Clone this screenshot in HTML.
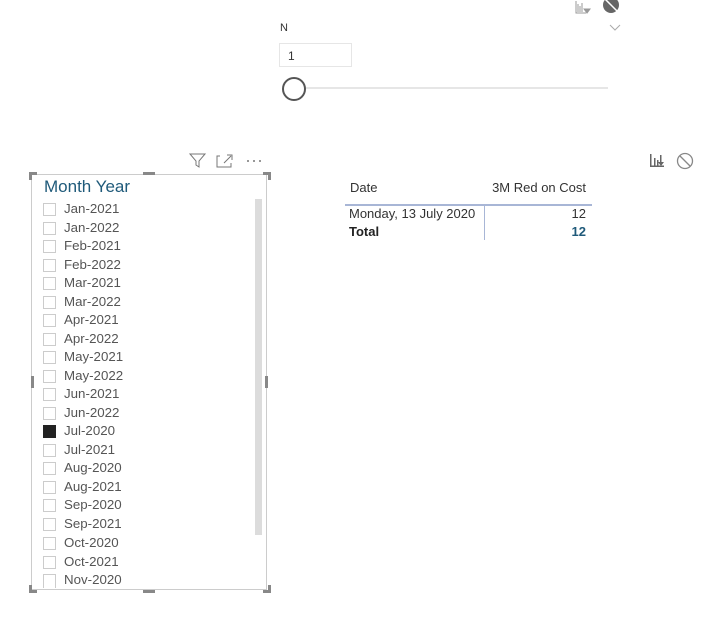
<!DOCTYPE html>
<html><head><style>
body{margin:0;width:711px;height:629px;background:#fff;position:relative;overflow:hidden;font-family:"Liberation Sans",Arial,sans-serif;}
.a{position:absolute}
.item{position:absolute;left:43px;width:200px;height:18px;font-size:13.3px;color:#555;line-height:18px}
.cb{position:absolute;left:0;top:3px;width:13px;height:13px;border:1px solid #ccc;box-sizing:border-box;background:#fff}
.item span{position:absolute;left:21px;top:0;white-space:nowrap}
</style></head><body>
<svg class="a" style="left:573px;top:0" width="50" height="16"><g stroke="#999" fill="none" stroke-width="1"><path d="M3 1v12h10M5 4v8M7 6v6M9 3v9"/><path d="M11 9l3 4 3-4z" fill="#999"/></g><circle cx="38" cy="5" r="8" fill="#666"/><path d="M32 -1l12 12" stroke="#fff" stroke-width="1.5"/></svg>
<div class="a" style="left:280px;top:22px;font-size:11px;color:#333">N</div>
<svg class="a" style="left:609px;top:24px" width="12" height="8"><path d="M1 1l5 5 5-5" stroke="#aaa" fill="none"/></svg>
<div class="a" style="left:279px;top:43px;width:73px;height:24px;border:1px solid #e6e6e6;box-sizing:border-box;font-size:12px;color:#333;padding:5px 0 0 8px">1</div>
<div class="a" style="left:305px;top:87px;width:303px;height:2px;background:#e6e6e6"></div>
<div class="a" style="left:282px;top:77px;width:24px;height:24px;border:2px solid #555;border-radius:50%;box-sizing:border-box;background:#fff"></div>
<svg class="a" style="left:188px;top:152px" width="80" height="18"><path d="M2 2h15l-6 7v6l-3-2v-4z" stroke="#777" fill="none"/><path d="M32 4h-3v11h14v-4M36 11l7-7M39 3h5v5" stroke="#777" fill="none"/><circle cx="60" cy="9" r="1" fill="#777"/><circle cx="66" cy="9" r="1" fill="#777"/><circle cx="72" cy="9" r="1" fill="#777"/></svg>
<div class="a" style="left:31px;top:174px;width:236px;height:416px;border:1px solid #ccc;box-sizing:border-box"></div>
<svg class="a" style="left:29px;top:172px" width="242" height="422"><g fill="#888"><rect x="0" y="0" width="8" height="3"/><rect x="0" y="0" width="3" height="8"/><rect x="234" y="0" width="8" height="3"/><rect x="239" y="0" width="3" height="8"/><rect x="0" y="418" width="8" height="3"/><rect x="0" y="413" width="3" height="8"/><rect x="234" y="418" width="8" height="3"/><rect x="239" y="413" width="3" height="8"/><rect x="114" y="0" width="12" height="3"/><rect x="114" y="418" width="12" height="3"/><rect x="2" y="204" width="3" height="12"/><rect x="236" y="204" width="3" height="12"/></g></svg>
<div class="a" style="left:44px;top:177px;font-size:17px;color:#1f5a7a">Month Year</div>
<div class="a" style="left:255px;top:199px;width:7px;height:336px;background:#dcdcdc"></div>
<div class="item" style="top:200px"><div class="cb"></div><span>Jan-2021</span></div>
<div class="item" style="top:218.5px"><div class="cb"></div><span>Jan-2022</span></div>
<div class="item" style="top:237px"><div class="cb"></div><span>Feb-2021</span></div>
<div class="item" style="top:255.5px"><div class="cb"></div><span>Feb-2022</span></div>
<div class="item" style="top:274px"><div class="cb"></div><span>Mar-2021</span></div>
<div class="item" style="top:292.5px"><div class="cb"></div><span>Mar-2022</span></div>
<div class="item" style="top:311px"><div class="cb"></div><span>Apr-2021</span></div>
<div class="item" style="top:329.5px"><div class="cb"></div><span>Apr-2022</span></div>
<div class="item" style="top:348px"><div class="cb"></div><span>May-2021</span></div>
<div class="item" style="top:366.5px"><div class="cb"></div><span>May-2022</span></div>
<div class="item" style="top:385px"><div class="cb"></div><span>Jun-2021</span></div>
<div class="item" style="top:403.5px"><div class="cb"></div><span>Jun-2022</span></div>
<div class="item" style="top:422px"><div class="cb" style="background:#222;border-color:#222"></div><span>Jul-2020</span></div>
<div class="item" style="top:440.5px"><div class="cb"></div><span>Jul-2021</span></div>
<div class="item" style="top:459px"><div class="cb"></div><span>Aug-2020</span></div>
<div class="item" style="top:477.5px"><div class="cb"></div><span>Aug-2021</span></div>
<div class="item" style="top:496px"><div class="cb"></div><span>Sep-2020</span></div>
<div class="item" style="top:514.5px"><div class="cb"></div><span>Sep-2021</span></div>
<div class="item" style="top:533.5px"><div class="cb"></div><span>Oct-2020</span></div>
<div class="item" style="top:552.5px"><div class="cb"></div><span>Oct-2021</span></div>
<div class="item" style="top:571px;height:17px;overflow:hidden"><div class="cb" style="height:16px"></div><span>Nov-2020</span></div>
<svg class="a" style="left:648px;top:152px" width="50" height="20"><g fill="#666"><rect x="2" y="2" width="1.5" height="13"/><rect x="2" y="13.5" width="14" height="1.5"/><rect x="6" y="6" width="1.5" height="8"/><rect x="9" y="8" width="1.5" height="6"/><rect x="12" y="3" width="1.5" height="7"/><path d="M10 10h6l-3 4z"/></g><circle cx="37" cy="9" r="7.5" stroke="#888" fill="none" stroke-width="1.3"/><path d="M32 4l10 10" stroke="#888" stroke-width="1.3"/></svg>
<div class="a" style="left:350px;top:180px;font-size:13px;color:#333">Date</div>
<div class="a" style="left:440px;width:146px;text-align:right;top:180px;font-size:13px;color:#333">3M Red on Cost</div>
<div class="a" style="left:345px;top:204px;width:247px;height:2px;background:#a8b6d6"></div>
<div class="a" style="left:484px;top:206px;width:1px;height:34px;background:#a8b6d6"></div>
<div class="a" style="left:349px;top:206px;font-size:13px;color:#333">Monday, 13 July 2020</div>
<div class="a" style="left:500px;width:86px;text-align:right;top:206px;font-size:13px;color:#333">12</div>
<div class="a" style="left:349px;top:224px;font-size:13px;font-weight:bold;color:#222">Total</div>
<div class="a" style="left:500px;width:86px;text-align:right;top:224px;font-size:13px;font-weight:bold;color:#1f5a7a">12</div>
</body></html>
